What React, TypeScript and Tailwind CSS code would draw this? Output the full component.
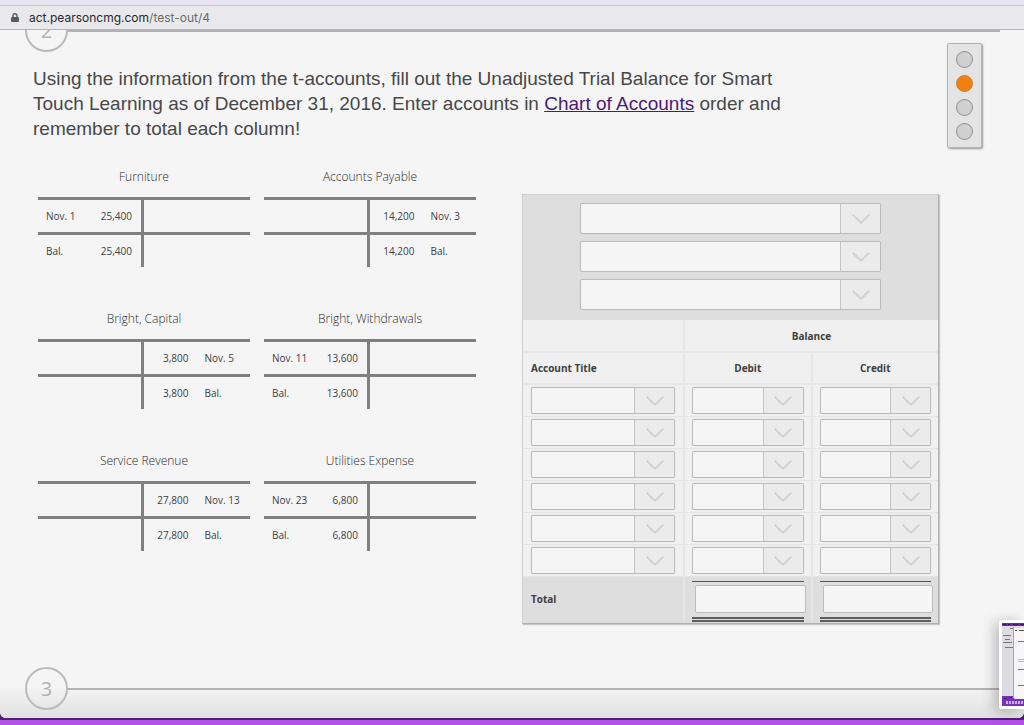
import React from "react";
import { FaLock } from "react-icons/fa";

type Entry = { date: string; amount: string };
type Account = { title: string; side: "debit" | "credit"; entries: Entry[] };

const accounts: Account[] = [
  { title: "Furniture", side: "debit", entries: [{ date: "Nov. 1", amount: "25,400" }, { date: "Bal.", amount: "25,400" }] },
  { title: "Accounts Payable", side: "credit", entries: [{ date: "Nov. 3", amount: "14,200" }, { date: "Bal.", amount: "14,200" }] },
  { title: "Bright, Capital", side: "credit", entries: [{ date: "Nov. 5", amount: "3,800" }, { date: "Bal.", amount: "3,800" }] },
  { title: "Bright, Withdrawals", side: "debit", entries: [{ date: "Nov. 11", amount: "13,600" }, { date: "Bal.", amount: "13,600" }] },
  { title: "Service Revenue", side: "credit", entries: [{ date: "Nov. 13", amount: "27,800" }, { date: "Bal.", amount: "27,800" }] },
  { title: "Utilities Expense", side: "debit", entries: [{ date: "Nov. 23", amount: "6,800" }, { date: "Bal.", amount: "6,800" }] },
];

function AddressBar() {
  return (
    <header className="border-t-[5px] border-[#e7e3f0] bg-[#e9e9ec]">
      <div className="flex h-[25px] items-center gap-2.5 border-t border-b border-t-[#c9c7cd] border-b-[#b4b4b8] pl-[11px] font-['Inter',sans-serif] text-[12px] text-[#6a6b6e]">
        <FaLock className="h-[9px] w-2 text-[#58595c]" aria-hidden="true" />
        <span>
          <span className="text-[#26272a]">act.pearsoncmg.com</span>/test-out/4
        </span>
      </div>
    </header>
  );
}

function StepMarker({ step }: { step: number }) {
  return (
    <div className="flex items-center pr-6 pl-[25px]">
      <span className="flex size-[43px] shrink-0 items-center justify-center rounded-full border-2 border-[#b9bbbd] text-xl text-[#b0b2b4]">
        {step}
      </span>
      <span className="h-0.5 flex-1 bg-[#b1b3b5]" />
    </div>
  );
}

function TAccount({ account }: { account: Account }) {
  const debit = account.side === "debit";
  return (
    <table className="w-full table-fixed border-separate border-spacing-0 self-start text-[10px] leading-4 text-[#404040]">
      <caption className="pb-3 text-center text-[12px] leading-4 font-light text-[#2c2c2c]">{account.title}</caption>
      <colgroup>
        <col className="w-[25%]" />
        <col className="w-[25%]" />
        <col className="w-[21%]" />
        <col />
      </colgroup>
      <tbody>
        {account.entries.map((entry) => (
          <tr key={entry.date} className="h-[35px]">
            <td className="border-t-[3px] border-[#808080] pl-2 whitespace-nowrap">{debit ? entry.date : ""}</td>
            <td className="border-t-[3px] border-r-[3px] border-[#808080] pr-[9px] text-right">{debit ? entry.amount : ""}</td>
            <td className="border-t-[3px] border-[#808080] text-right">{debit ? "" : entry.amount}</td>
            <td className="border-t-[3px] border-[#808080] pl-4 whitespace-nowrap">{debit ? "" : entry.date}</td>
          </tr>
        ))}
      </tbody>
    </table>
  );
}

function DropDown({ label, tall = false }: { label: string; tall?: boolean }) {
  return (
    <div className={tall ? "relative h-[31px]" : "relative h-[27px]"}>
      <select
        aria-label={label}
        className="block size-full appearance-none rounded-xs border border-[#bcbcbc] bg-[#f5f5f5] pr-10 pl-2 text-[10px] text-[#404040] shadow-[0_0_1px_#bcbcbc]"
      >
        <option value="" />
      </select>
      <span className="pointer-events-none absolute inset-y-px right-px flex w-10 items-center justify-center border-l border-[#c4c4c4] bg-[#ebebeb]">
        <svg viewBox="0 0 18 10" className="h-2.5 w-[18px]" fill="none" stroke="#d2d2d2" strokeWidth="2">
          <path d="M0.7 0.7 L9 8.8 L17.3 0.7" />
        </svg>
      </span>
    </div>
  );
}

const rows = [1, 2, 3, 4, 5, 6];

function TotalField({ label }: { label: string }) {
  return (
    <div className="flex flex-col">
      <span className="h-px bg-[#555]" />
      <input
        type="text"
        aria-label={label}
        className="-mr-0.5 mt-[3px] ml-[3px] mb-1 h-7 rounded-xs border border-[#bcbcbc] bg-[#f5f5f5] px-2 text-[10px]"
      />
      <span className="h-[5px] border-y-2 border-[#5e5e5e]" />
    </div>
  );
}

function TrialBalance() {
  return (
    <form className="border border-[#cfcfcf] border-r-[#b0b0b0] border-b-[#b0b0b0] bg-[#f0f0f0] shadow-[1px_1px_1px_#c8c8c8]">
      <div className="flex flex-col gap-[7px] bg-[#dedede] px-[57px] pt-2 pb-[10px]">
        <DropDown tall label="Company name" />
        <DropDown tall label="Statement name" />
        <DropDown tall label="Statement date" />
      </div>
      <table className="w-full table-fixed border-separate border-spacing-0 text-[10px] leading-4 text-[#404040]">
        <colgroup>
          <col className="w-[160px]" />
          <col />
          <col />
        </colgroup>
        <thead>
          <tr className="h-[33px]">
            <td className="border-b-2 border-[#e6e6e6]" />
            <th colSpan={2} className="border-b-2 border-l-2 border-[#e6e6e6]">Balance</th>
          </tr>
          <tr className="h-8">
            <th className="border-b-2 border-[#e6e6e6] px-2 text-left">Account Title</th>
            <th className="border-b-2 border-l-2 border-[#e6e6e6]">Debit</th>
            <th className="border-b-2 border-l-2 border-[#e6e6e6]">Credit</th>
          </tr>
        </thead>
        <tbody>
          {rows.map((row) => (
            <tr key={row} className="h-8">
              <td className="border-b border-[#e4e4e4] px-2 py-0.5"><DropDown label={`Account title ${row}`} /></td>
              <td className="border-b border-l-2 border-[#e4e4e4] px-[7px] py-0.5"><DropDown label={`Debit ${row}`} /></td>
              <td className="border-b border-l-2 border-[#e4e4e4] px-[7px] py-0.5"><DropDown label={`Credit ${row}`} /></td>
            </tr>
          ))}
        </tbody>
        <tfoot className="bg-[#dedede]">
          <tr>
            <th className="px-2 pb-0.5 text-left">Total</th>
            <td className="border-l-2 border-[#e6e6e6] px-[7px] pt-1 pb-px"><TotalField label="Total debit" /></td>
            <td className="border-l-2 border-[#e6e6e6] px-[7px] pt-1 pb-px"><TotalField label="Total credit" /></td>
          </tr>
        </tfoot>
      </table>
    </form>
  );
}

function Progress() {
  return (
    <nav aria-label="Progress" className="absolute top-[43px] right-[42px] flex flex-col gap-[7px] rounded-xs border border-[#b4b4b4] bg-[#e4e4e4] px-2 py-[7px] shadow-[1px_1px_2px_#999]">
      {[1, 2, 3, 4].map((n) => (
        <button
          key={n}
          type="button"
          aria-label={`Step ${n}`}
          className={n === 2 ? "size-[17px] rounded-full border border-[#c98238] bg-[#f08010]" : "size-[17px] rounded-full border border-[#8f8f8f] bg-[#cfcfcf]"}
        />
      ))}
    </nav>
  );
}

function ScreenshotPreview() {
  return (
    <div className="absolute right-0 bottom-4 w-[25px] overflow-hidden rounded-l-xs bg-white p-[3px] pr-0 shadow-[-4px_2px_14px_#00000040]">
      <svg viewBox="0 0 22 83" className="h-[83px] w-[22px]" aria-hidden="true">
        <rect width="22" height="83" fill="#dedbe2" />
        <rect width="22" height="3" fill="#6b2ba8" />
        <path d="M1 1.5H4M6 1.5H8M11 1.5H16M18 1.5H22" stroke="#3e1568" />
        <path d="M8 5.5H11M1 12.5H9M3 16.5H8M1 19.5H10M3 24.5H11" stroke="#77757a" />
        <rect y="73" width="22" height="10" fill="#7933b9" />
        <path d="M2 75.5H5M7 74.5H10" stroke="#442061" />
        <path d="M11 5H22V76H14Q11 76 11 73Z" fill="#f6f6f6" />
        <path d="M11.5 4V75" stroke="#aaa6ae" />
        <path d="M13 7.5H15M17 7.5H22" stroke="#555" />
        <path d="M16 18.5H22M16 46.5H22M16 62.5H22" stroke="#777" />
        <path d="M16 36.5H22M16 38.5H22" stroke="#bbb" />
        <path d="M4 79.5H21" stroke="#c9b4dc" strokeWidth="3" strokeDasharray="2 1" />
      </svg>
    </div>
  );
}

export default function App() {
  return (
    <div className="relative flex min-h-screen flex-col bg-[#b452e8] font-['Open_Sans','Noto_Sans',sans-serif]">
      <div className="bg-[#4e2078] pb-0.5">
        <div className="overflow-hidden rounded-b-md bg-[#f5f5f5]">
          <AddressBar />
          <main>
            <div className="overflow-hidden">
              <div className="-mt-[21px]">
                <StepMarker step={2} />
              </div>
            </div>
            <p className="max-w-[840px] px-[33px] pt-3.5 font-['Liberation_Sans',Arial,sans-serif] text-[19px] leading-[25px] text-[#484848]">
              Using the information from the t-accounts, fill out the Unadjusted Trial Balance for Smart
              Touch Learning as of December 31, 2016. Enter accounts in{" "}
              <a href="#chart-of-accounts" className="text-[#4b1a72] underline">Chart of Accounts</a> order and
              remember to total each column!
            </p>
            <div className="grid grid-cols-[438fr_417fr] items-start gap-[46px] pt-7 pr-[85px] pb-[43px] pl-[38px]">
              <div className="grid grid-cols-2 gap-x-3.5 gap-y-11">
                {accounts.map((account) => (
                  <TAccount key={account.title} account={account} />
                ))}
              </div>
              <div className="pt-[25px]">
                <TrialBalance />
              </div>
            </div>
            <div className="-mt-7 bg-linear-to-b from-[#f5f5f5] from-60% to-[#e0e0e0] pt-7 pb-2">
              <StepMarker step={3} />
            </div>
          </main>
        </div>
      </div>
      <Progress />
      <ScreenshotPreview />
    </div>
  );
}
